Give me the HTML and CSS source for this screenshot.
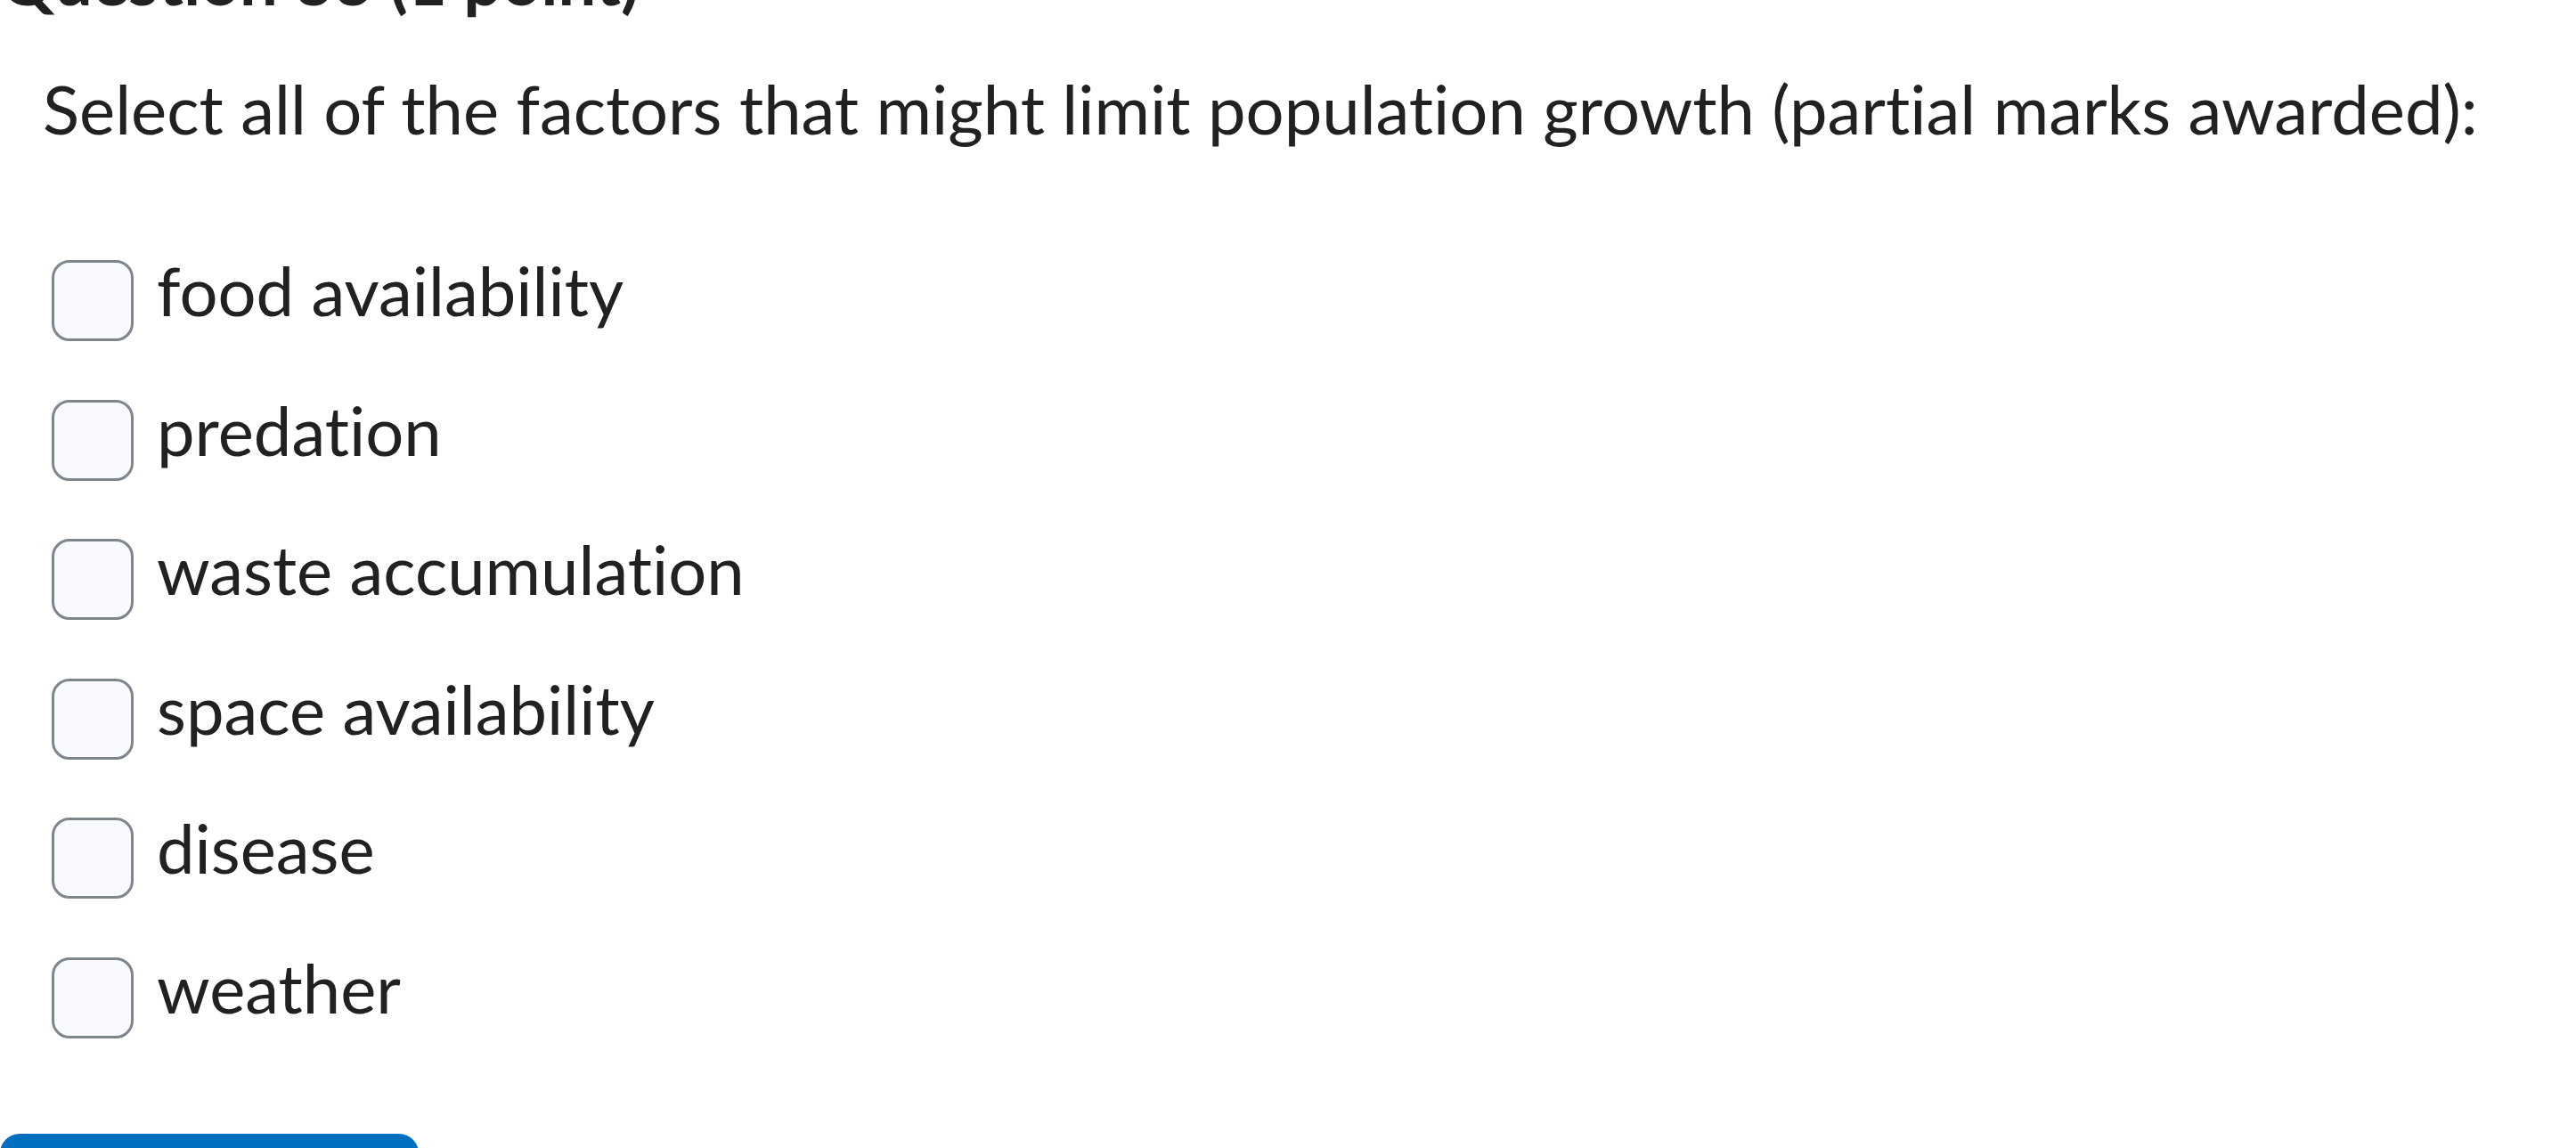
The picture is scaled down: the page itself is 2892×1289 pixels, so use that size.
FILE: index.html
```html
<!DOCTYPE html>
<html lang="en">
<head>
    <meta charset="UTF-8">
    <title>Question 33</title>
    <link rel="stylesheet" href="styles.css">
</head>
<body>
    <div class="question">
        <h2 class="question-title">Question 33 (1 point)</h2>

        <p class="question-text">Select all of the factors that might limit population growth (partial marks awarded):</p>

        <div class="options">
            <label class="option">
                <input type="checkbox">
                <span class="box"></span>
                <span class="option-text">food availability</span>
            </label>
            <label class="option">
                <input type="checkbox">
                <span class="box"></span>
                <span class="option-text">predation</span>
            </label>
            <label class="option">
                <input type="checkbox">
                <span class="box"></span>
                <span class="option-text">waste accumulation</span>
            </label>
            <label class="option">
                <input type="checkbox">
                <span class="box"></span>
                <span class="option-text">space availability</span>
            </label>
            <label class="option">
                <input type="checkbox">
                <span class="box"></span>
                <span class="option-text">disease</span>
            </label>
            <label class="option">
                <input type="checkbox">
                <span class="box"></span>
                <span class="option-text">weather</span>
            </label>
        </div>

        <button class="btn"></button>
    </div>
</body>
</html>
```

FILE: styles.css
```css
:root {
    --text-color: #202122;
    --primary-color: #006fbf;
    --box-border: #7f868b;
    --box-fill: #f9fafe;
}

* {
    margin: 0;
    padding: 0;
    box-sizing: border-box;
}

body {
    background-color: #ffffff;
    color: var(--text-color);
    font-family: Lato, "Open Sans", sans-serif;
    font-variant-ligatures: none;
    overflow: hidden;
}

.question {
    margin-top: -65px;
}

.question-title {
    font-size: 76px;
    font-weight: 700;
    line-height: 84px;
}

.question-text {
    font-size: 76px;
    line-height: 90px;
    margin-top: 58px;
    padding-left: 48px;
}

.options {
    display: flex;
    flex-direction: column;
    gap: 54.6px;
    margin-top: 114px;
    padding-left: 58px;
}

.option {
    display: flex;
    align-items: flex-start;
    gap: 26px;
    font-size: 76px;
    line-height: 90px;
    cursor: pointer;
}

.option input {
    display: none;
}

.box {
    width: 92px;
    height: 91px;
    margin-top: 11px;
    border: 3px solid var(--box-border);
    border-radius: 20px;
    background-color: var(--box-fill);
    flex-shrink: 0;
}

.btn {
    display: block;
    width: 470px;
    height: 120px;
    margin-top: 107px;
    border: none;
    border-radius: 22px;
    background-color: var(--primary-color);
}
```
